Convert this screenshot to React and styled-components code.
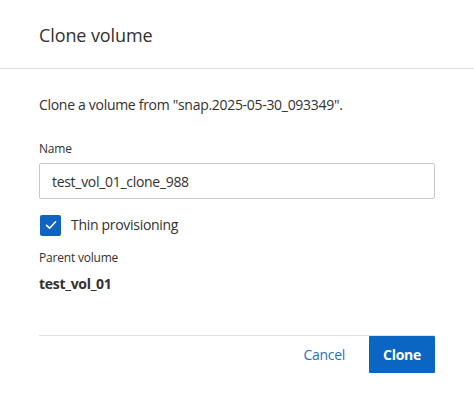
import React from "react";
import styled, { createGlobalStyle } from "styled-components";

const Global = createGlobalStyle`
  html, body { margin: 0; padding: 0; background: #ffffff; }
  * { box-sizing: border-box; }
  body { font-family: "Open Sans", "Noto Sans", sans-serif; color: #323130; letter-spacing: -0.3px; }
`;

const Dialog = styled.div`
  width: 474px;
  height: 397px;
  background: #ffffff;
  display: flex;
  flex-direction: column;
`;

const Header = styled.div`
  height: 69px;
  padding: 0 39px;
  display: flex;
  align-items: center;
  border-bottom: 1px solid #e1e1e1;
`;

const Title = styled.h1`
  margin: 0;
  font-size: 18px;
  font-weight: 400;
  letter-spacing: -0.1px;
  color: #323130;
  padding-top: 2px;
`;

const Body = styled.div`
  padding: 26px 39px 0;
  display: flex;
  flex-direction: column;
`;

const Description = styled.p`
  margin: 0;
  font-size: 14px;
  line-height: 20px;
  color: #323130;
`;

const Label = styled.div`
  font-size: 12px;
  line-height: 16px;
  letter-spacing: -0.2px;
  color: #323130;
  margin-top: ${(p) => p.$top}px;
`;

const Input = styled.input`
  margin-top: 6px;
  width: 396px;
  height: 36px;
  border: 1px solid #c8c8c8;
  border-radius: 2px;
  padding: 0 12px;
  font-family: inherit;
  font-size: 14px;
  letter-spacing: -0.3px;
  color: #323130;
  outline: none;
`;

const CheckRow = styled.label`
  margin-top: 15px;
  display: flex;
  align-items: center;
  gap: 10px;
  font-size: 14px;
  line-height: 22px;
`;

const Box = styled.span`
  width: 21px;
  height: 21px;
  background: #0f64c3;
  border-radius: 2px;
  display: flex;
  align-items: center;
  justify-content: center;
  margin-left: 1px;
`;

const Value = styled.div`
  margin-top: 8px;
  font-size: 14px;
  font-weight: 700;
  line-height: 20px;
  color: #323130;
`;

const Footer = styled.div`
  margin: auto 39px 24px;
  border-top: 1px solid #e1e1e1;
  display: flex;
  justify-content: flex-end;
  align-items: center;
  gap: 24px;
`;

const LinkButton = styled.button`
  background: none;
  border: none;
  font-family: inherit;
  font-size: 14px;
  letter-spacing: -0.3px;
  color: #2a6fc0;
  padding: 0;
`;

const PrimaryButton = styled.button`
  width: 66px;
  height: 37px;
  background: #0a66c2;
  border: none;
  border-radius: 1px;
  color: #ffffff;
  font-family: inherit;
  font-size: 14px;
  letter-spacing: -0.3px;
  font-weight: 700;
`;

export default function App() {
  return (
    <>
      <Global />
      <Dialog>
        <Header>
          <Title>Clone volume</Title>
        </Header>
        <Body>
          <Description>Clone a volume from "snap.2025-05-30_093349".</Description>
          <Label $top={26}>Name</Label>
          <Input defaultValue="test_vol_01_clone_988" />
          <CheckRow>
            <Box>
              <svg width="14" height="14" viewBox="0 0 14 14">
                <path d="M2.5 7.3 L5.6 10.2 L11.6 3.8" fill="none" stroke="#fff" strokeWidth="1.6" strokeLinecap="round" strokeLinejoin="round" />
              </svg>
            </Box>
            Thin provisioning
          </CheckRow>
          <Label $top={14}>Parent volume</Label>
          <Value>test_vol_01</Value>
        </Body>
        <Footer>
          <LinkButton>Cancel</LinkButton>
          <PrimaryButton>Clone</PrimaryButton>
        </Footer>
      </Dialog>
    </>
  );
}
